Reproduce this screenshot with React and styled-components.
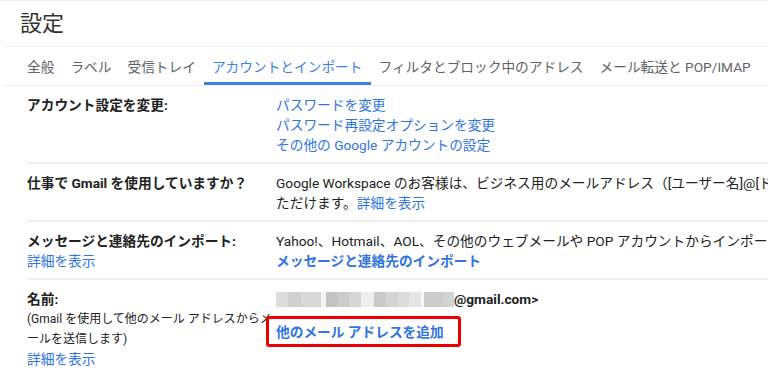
import React from "react";
import styled, { createGlobalStyle } from "styled-components";

const Global = createGlobalStyle`
  html, body { margin: 0; padding: 0; background: #fff; }
  body {
    overflow: hidden;
    width: 768px;
    height: 377px;
    font-family: Roboto, "Noto Sans CJK JP", "Noto Sans", sans-serif;
    color: #222;
  }
`;

const Page = styled.div`
  width: 768px;
  height: 377px;
  overflow: hidden;
  border-top: 1px solid #efefef;
  box-sizing: border-box;
`;

const Header = styled.div`
  margin-left: 4px;
  height: 45px;
  padding-left: 16px;
  display: flex;
  align-items: center;
  border-bottom: 1px solid #eeeeee;
`;

const Title = styled.h1`
  margin: 0;
  font-size: 22px;
  font-weight: 400;
  color: #333;
  line-height: 1;
`;

const TabBar = styled.nav`
  margin-left: 4px;
  padding-left: 15px;
  display: flex;
  white-space: nowrap;
  border-bottom: 1px solid #eeeeee;
`;

const Tab = styled.div`
  padding: 10px 8px 5px;
  font-size: 13.7px;
  line-height: 20px;
  color: ${(p) => (p.$active ? "#3b7fe9" : "#5f6368")};
  border-bottom: 3px solid ${(p) => (p.$active ? "#3b7fe9" : "transparent")};
  flex: none;
`;

const Table = styled.div`
  margin-left: 27px;
  width: 1000px;
`;

const Row = styled.div`
  display: grid;
  grid-template-columns: 249px 1fr;
  padding: 9px 0 7px;
  border-bottom: 2px solid #eeeeee;
  font-size: 13.7px;
  line-height: 20px;

  &:last-child {
    border-bottom: none;
  }
`;

const LabelCol = styled.div`
  display: flex;
  flex-direction: column;
  white-space: nowrap;
`;

const Label = styled.div`
  font-weight: 700;
  color: #222;
`;

const Note = styled.div`
  font-size: 12px;
  line-height: 20px;
  color: #222;
`;

const ValueCol = styled.div`
  display: flex;
  flex-direction: column;
  align-items: flex-start;
  white-space: nowrap;
`;

const Line = styled.div`
  color: #222;
`;

const Link = styled.a`
  color: #2f74e0;
  text-decoration: none;
  font-weight: ${(p) => (p.$bold ? 700 : 400)};
  cursor: pointer;
`;

const AddressLine = styled.div`
  display: flex;
  align-items: center;
  height: 20px;
  font-weight: 700;
  color: #222;
`;

const Mosaic = styled.div`
  display: flex;
  height: 15px;
  margin-top: 1px;
`;

const Cell = styled.span`
  width: ${(p) => p.$w}px;
  height: 100%;
  background: ${(p) => p.$c};
`;

const AddBox = styled.div`
  position: relative;
  margin: 7px 0 0 -10px;
  padding: 3px 14px 2px 7px;
  border: 3px solid #ee0000;
  border-radius: 3px;
  background: #fff;
`;

const mosaicCells = [
  [12, "#dcdcdc"],
  [13, "#d0d0d0"],
  [20, "#d8d8d8"],
  [5, "#f4f4f4"],
  [12, "#c4c4c4"],
  [11, "#cccccc"],
  [12, "#d4d6da"],
  [13, "#eeeeee"],
  [12, "#c9c9c9"],
  [12, "#d4d4d4"],
  [11, "#dcdcdc"],
  [12, "#e4e4e4"],
  [3, "#f6f6f6"],
  [19, "#cccccc"],
  [11, "#d3d3d3"],
];

const tabs = [
  "全般",
  "ラベル",
  "受信トレイ",
  "アカウントとインポート",
  "フィルタとブロック中のアドレス",
  "メール転送と POP/IMAP",
  "アドオン",
  "チャットと Meet",
];

export default function App() {
  return (
    <>
      <Global />
      <Page>
        <Header>
          <Title>設定</Title>
        </Header>
        <TabBar>
          {tabs.map((t) => (
            <Tab key={t} $active={t === "アカウントとインポート"}>
              {t}
            </Tab>
          ))}
        </TabBar>
        <Table>
          <Row>
            <LabelCol>
              <Label>アカウント設定を変更:</Label>
            </LabelCol>
            <ValueCol>
              <Link>パスワードを変更</Link>
              <Link>パスワード再設定オプションを変更</Link>
              <Link>その他の Google アカウントの設定</Link>
            </ValueCol>
          </Row>
          <Row>
            <LabelCol>
              <Label>仕事で Gmail を使用していますか？</Label>
            </LabelCol>
            <ValueCol>
              <Line>
                Google Workspace のお客様は、ビジネス用のメールアドレス（[ユーザー名]@[ドメイン名]）で Gmail をご利用い
              </Line>
              <Line>
                ただけます。<Link>詳細を表示</Link>
              </Line>
            </ValueCol>
          </Row>
          <Row>
            <LabelCol>
              <Label>メッセージと連絡先のインポート:</Label>
              <Link>詳細を表示</Link>
            </LabelCol>
            <ValueCol>
              <Line>
                Yahoo!、Hotmail、AOL、その他のウェブメールや POP アカウントからインポートします。
              </Line>
              <Link $bold>メッセージと連絡先のインポート</Link>
            </ValueCol>
          </Row>
          <Row>
            <LabelCol>
              <Label>名前:</Label>
              <Note>(Gmail を使用して他のメール アドレスからメ</Note>
              <Note>ールを送信します)</Note>
              <Link>詳細を表示</Link>
            </LabelCol>
            <ValueCol>
              <AddressLine>
                <Mosaic>
                  {mosaicCells.map(([w, c], i) => (
                    <Cell key={i} $w={w} $c={c} />
                  ))}
                </Mosaic>
                <span>@gmail.com&gt;</span>
              </AddressLine>
              <AddBox>
                <Link $bold>他のメール アドレスを追加</Link>
              </AddBox>
            </ValueCol>
          </Row>
        </Table>
      </Page>
    </>
  );
}
